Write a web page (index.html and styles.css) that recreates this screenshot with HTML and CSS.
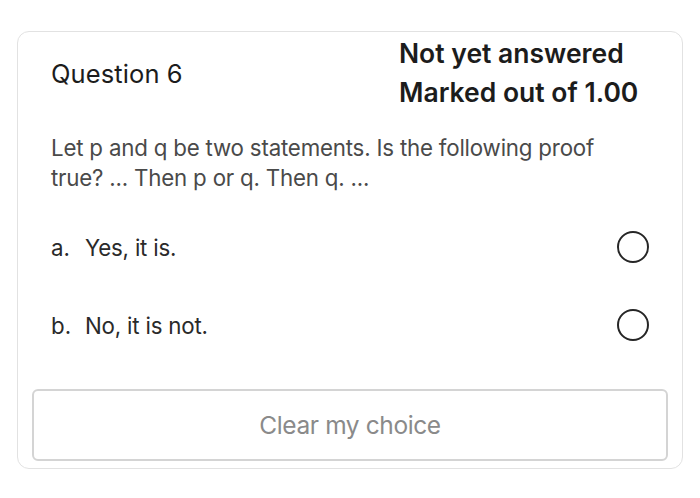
FILE: index.html
```html
<!DOCTYPE html>
<html lang="en">
<head>
<meta charset="utf-8">
<title>Question 6</title>
<link rel="stylesheet" href="styles.css">
</head>
<body>
<div class="card">
  <div class="header">
    <div class="qno">Question 6</div>
    <div class="info">
      <div>Not yet answered</div>
      <div>Marked out of 1.00</div>
    </div>
  </div>
  <div class="qtext">Let p and q be two statements. Is the following proof true? ... Then p or q. Then q. ...</div>
  <div class="options">
    <label class="option"><span class="letter">a.</span><span class="answer">Yes, it is.</span><span class="radio"></span></label>
    <label class="option"><span class="letter">b.</span><span class="answer">No, it is not.</span><span class="radio"></span></label>
  </div>
  <div class="clear">Clear my choice</div>
</div>
</body>
</html>
```
FILE: styles.css
```css
html, body {
  margin: 0;
  padding: 0;
  background: #ffffff;
}
body {
  font-family: Inter, "Noto Sans", "Liberation Sans", sans-serif;
  color: #1f1f1f;
  padding: 31px 17px 0 17px;
}
.card {
  width: 666px;
  height: 438px;
  box-sizing: border-box;
  border: 1px solid #e2e2e2;
  border-radius: 12px;
  padding: 3px 14px 0 14px;
  display: flex;
  flex-direction: column;
}
.header {
  display: grid;
  grid-template-columns: 348px 1fr;
  align-items: center;
  padding: 0 19px;
}
.qno {
  font-size: 25.5px;
  font-weight: 400;
  color: #1c1c1c;
  letter-spacing: 0.1px;
}
.info {
  font-size: 26.5px;
  font-weight: 600;
  line-height: 39px;
  color: #1c1c1c;
  letter-spacing: 0;
  margin-top: -1px;
}
.qtext {
  margin-top: 21px;
  padding: 0 19px;
  font-size: 22.3px;
  line-height: 30px;
  color: #4a4a4a;
  letter-spacing: -0.2px;
}
.options {
  margin-top: 15px;
  display: flex;
  flex-direction: column;
}
.option {
  height: 78px;
  display: flex;
  align-items: center;
  padding: 0 19px;
  font-size: 22.3px;
  color: #2a2a2a;
}
.letter {
  width: 34px;
}
.answer {
  flex: 1;
  letter-spacing: -0.2px;
}
.radio {
  width: 32px;
  height: 32px;
  box-sizing: border-box;
  border: 2px solid #262626;
  border-radius: 50%;
}
.clear {
  margin-top: 25px;
  height: 72px;
  box-sizing: border-box;
  border: 2px solid #d4d4d4;
  border-radius: 6px;
  display: flex;
  align-items: center;
  justify-content: center;
  font-size: 24.5px;
  color: #8a8a8a;
  letter-spacing: -0.4px;
}
```
